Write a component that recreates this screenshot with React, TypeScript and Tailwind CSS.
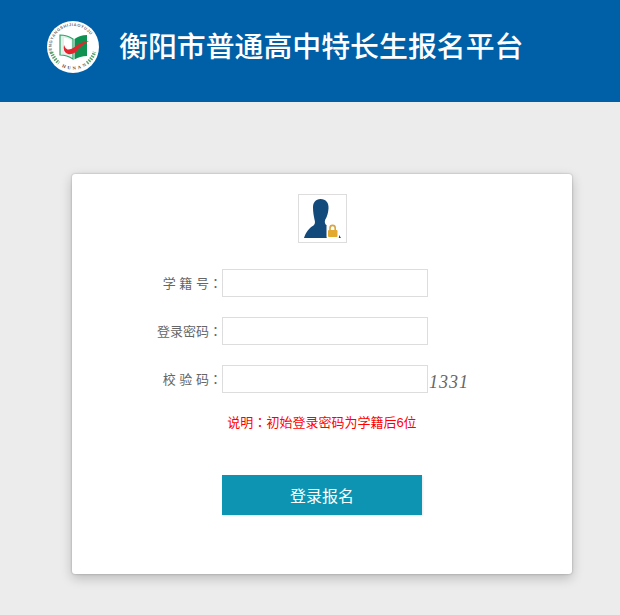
const font = { cjk: "font-['Liberation_Sans','Noto_Sans_CJK_SC',sans-serif]" };

function Logo() {
  return (
    <svg width="52" height="52" viewBox="0 0 52 52" className="shrink-0">
      <circle cx="26" cy="26" r="26" fill="#fff" />
      <defs>
        <path id="ring-top" d="M5.5 33 A21.5 21.5 0 1 1 46.5 33" />
        <path id="ring-bottom" d="M8 40 A23 23 0 0 0 44 40" />
      </defs>
      <text fontSize="4.1" fill="#6b6f6d" fontFamily="'Liberation Sans',sans-serif" fontWeight="700" letterSpacing="0.55">
        <textPath href="#ring-top">HENGYANGSHIJIAOYUJU</textPath>
      </text>
      <text fontSize="4.6" fill="#3d3d33" fontFamily="'Liberation Serif',serif" fontWeight="700" letterSpacing="2.2">
        <textPath href="#ring-bottom" startOffset="9">HUNAN</textPath>
      </text>
      <path d="M4.5 31 A22 22 0 0 0 12 42" fill="none" stroke="#5aa06a" strokeWidth="3.6" strokeDasharray="1.5 1.1" />
      <path d="M40 42 A22 22 0 0 0 47.5 31" fill="none" stroke="#5aa06a" strokeWidth="3.6" strokeDasharray="1.5 1.1" />
      <path d="M13 14 Q20 14 26 18 L26 38 Q20 34 13 34 Z" fill="#dff1e8" stroke="#35a06a" strokeWidth="1.2" />
      <path d="M17 16.5 Q21 17 24.5 19.5 L24.5 34 Q21 32 17 31.5 Z" fill="#fff" />
      <path d="M27.5 18 Q33 14 40 14 L40 35 Q33 35 27.5 38.5 Z" fill="#0f9150" />
      <path d="M17 24 Q15.5 31 21 33 Q27 34.5 32 27 Q35 24 42 20 Q34 21 29 25 Q24 29 20.5 28.5 Q18 27.5 17 24 Z" fill="#e3262e" />
    </svg>
  );
}

function Avatar() {
  return (
    <div className="flex h-[49px] w-[49px] items-center justify-center border border-[#ddd] bg-white">
      <svg width="47" height="47" viewBox="0 0 47 47">
        <path
          d="M21.5 4 C27 4 30 8 29.5 13.5 C29.2 18 28.2 21.5 26.3 24.5 C25.3 27 25.8 29.5 28 30.5 C32 32 38 36 42 43 L5 43 C6.5 38 10 33 14.5 30.5 C16.2 29 16.3 27 15.5 24.5 C14.8 21 14 17 14 12.5 C14 7.5 16.5 4.3 21.5 4 Z"
          fill="#134a7c"
        />
        <rect x="27.5" y="29" width="12.5" height="15" rx="2" fill="#fff" />
        <path d="M31 35 L31 33 A2.6 2.6 0 0 1 36.2 33 L36.2 35" fill="none" stroke="#d9a441" strokeWidth="1.6" />
        <rect x="29" y="35" width="9.5" height="7" rx="1" fill="#e3a92f" />
      </svg>
    </div>
  );
}

// Centred full-width colon, as the Traditional Chinese cut draws it
function Colon() {
  return <span className="font-['Noto_Sans_CJK_TC',sans-serif]">：</span>;
}

function Row({ label, children }: { label: string; children?: React.ReactNode }) {
  return (
    <div className="flex h-7 items-center">
      <label className="w-[150px] text-right text-[13px] text-[#666]">
        {label}
        <Colon />
      </label>
      <input className="h-7 w-[206px] border border-[#ddd] bg-white outline-none" />
      {children}
    </div>
  );
}

export default function App() {
  return (
    <div className={`h-[615px] overflow-hidden bg-[#ececec] ${font.cjk}`}>
      <header className="flex h-[102px] items-center bg-[#0060a7] pb-[9px] pl-[47px]">
        <Logo />
        <h1 className="ml-5 pt-[3px] text-[28.9px] font-medium text-white">衡阳市普通高中特长生报名平台</h1>
      </header>

      <main className="ml-[72px] mt-[72px] flex h-[400px] w-[500px] flex-col items-center rounded-[3px] bg-white pt-5 shadow-[0_0_2px_rgba(0,0,0,0.3),0_4px_12px_rgba(0,0,0,0.22)]">
        <Avatar />

        <form className="mt-[26px] flex w-full flex-col gap-5">
          <Row label="学 籍 号" />
          <Row label="登录密码" />
          <Row label="校 验 码">
            <span className="mt-[5px] self-center pl-px font-['Liberation_Serif',serif] text-lg tracking-[1px] text-[#666] italic">
              1331
            </span>
          </Row>
        </form>

        <p className="mt-[19px] text-[13px] text-[#f00]">
          说明
          <Colon />
          初始登录密码为学籍后6位
        </p>

        <button className="mt-[42px] h-10 w-[200px] bg-[#0c94b2] pt-[5px] text-base text-white shadow-[1px_1px_2px_rgba(0,0,0,0.1)]">
          登录报名
        </button>
      </main>
    </div>
  );
}
